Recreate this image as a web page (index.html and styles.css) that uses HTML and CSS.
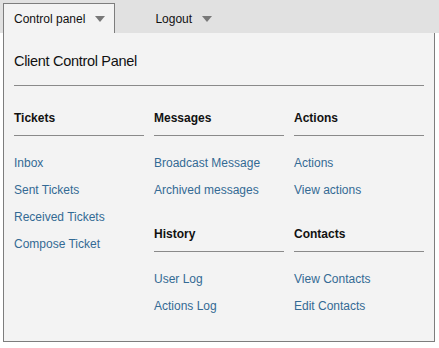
FILE: index.html
```html
<!DOCTYPE html>
<html>
<head>
<meta charset="utf-8">
<link rel="stylesheet" href="styles.css">
</head>
<body>
<div class="topbar">
  <div class="tab active">Control panel <span class="arrow"></span></div>
  <div class="tab">Logout <span class="arrow"></span></div>
</div>
<div class="panel">
  <div class="title">Client Control Panel</div>
  <div class="cols">
    <div class="col">
      <div class="section">
        <div class="heading">Tickets</div>
        <a class="link" href="#">Inbox</a>
        <a class="link" href="#">Sent Tickets</a>
        <a class="link" href="#">Received Tickets</a>
        <a class="link" href="#">Compose Ticket</a>
      </div>
    </div>
    <div class="col">
      <div class="section">
        <div class="heading">Messages</div>
        <a class="link" href="#">Broadcast Message</a>
        <a class="link" href="#">Archived messages</a>
      </div>
      <div class="section">
        <div class="heading">History</div>
        <a class="link" href="#">User Log</a>
        <a class="link" href="#">Actions Log</a>
      </div>
    </div>
    <div class="col">
      <div class="section">
        <div class="heading">Actions</div>
        <a class="link" href="#">Actions</a>
        <a class="link" href="#">View actions</a>
      </div>
      <div class="section">
        <div class="heading">Contacts</div>
        <a class="link" href="#">View Contacts</a>
        <a class="link" href="#">Edit Contacts</a>
      </div>
    </div>
  </div>
</div>
</body>
</html>
```
FILE: styles.css
```css
html, body {
  margin: 0;
  padding: 0;
  background: #ffffff;
}
body {
  font-family: "Liberation Sans", Arial, sans-serif;
  font-size: 12px;
  color: #111;
}
.topbar {
  height: 33px;
  background: #e1e1e1;
  display: flex;
  align-items: flex-end;
  padding-left: 3px;
}
.tab {
  height: 29px;
  line-height: 28px;
  padding: 0 9px 0 10px;
  border: 1px solid transparent;
  border-bottom: none;
  display: flex;
  align-items: center;
  gap: 10px;
  color: #111;
  white-space: nowrap;
}
.tab.active {
  background: #f3f3f3;
  border-color: #7d7d7d;
}
.tab + .tab {
  margin-left: 29px;
}
.arrow {
  width: 0;
  height: 0;
  border-left: 5px solid transparent;
  border-right: 5px solid transparent;
  border-top: 6px solid #787878;
  margin-top: 1px;
}
.panel {
  margin-left: 3px;
  width: 410px;
  padding: 19px 10px 21px 10px;
  background: #f3f3f3;
  border: 1px solid #7d7d7d;
  border-top: none;
}
.title {
  font-size: 14.5px;
  letter-spacing: -0.3px;
  line-height: 18px;
  padding-bottom: 15px;
  border-bottom: 1px solid #8a8a8a;
  color: #111;
}
.cols {
  display: grid;
  grid-template-columns: 130px 130px 130px;
  column-gap: 10px;
  margin-top: 24px;
}
.section {
  display: flex;
  flex-direction: column;
}
.section + .section {
  margin-top: 22px;
}
.heading {
  font-weight: bold;
  line-height: 16px;
  padding-bottom: 9px;
  border-bottom: 1px solid #8a8a8a;
  color: #111;
}
.link {
  display: block;
  height: 27px;
  line-height: 27px;
  color: #336a94;
  text-decoration: none;
}
.heading + .link {
  margin-top: 14px;
}
```
